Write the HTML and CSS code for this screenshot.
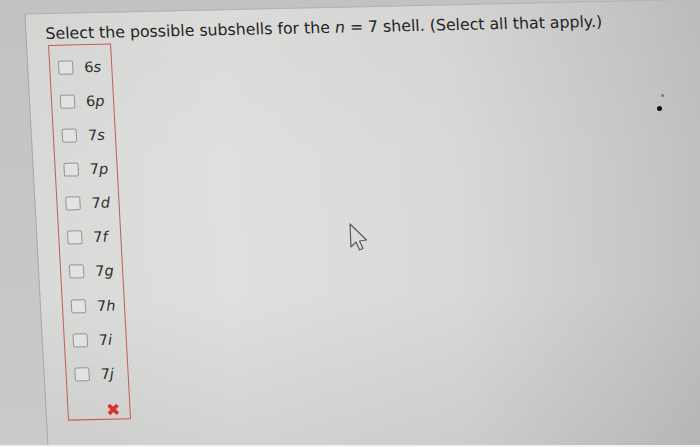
FILE: index.html
```html
<!DOCTYPE html>
<html>
<head>
<meta charset="utf-8">
<link rel="stylesheet" href="styles.css">
</head>
<body>
<div class="panel">
  <p class="question">Select the possible subshells for the <i>n</i> = 7 shell. (Select all that apply.)</p>
  <div class="answers">
    <label class="opt"><span class="check"></span><span class="lbl">6<i>s</i></span></label>
    <label class="opt"><span class="check"></span><span class="lbl">6<i>p</i></span></label>
    <label class="opt"><span class="check"></span><span class="lbl">7<i>s</i></span></label>
    <label class="opt"><span class="check"></span><span class="lbl">7<i>p</i></span></label>
    <label class="opt"><span class="check"></span><span class="lbl">7<i>d</i></span></label>
    <label class="opt"><span class="check"></span><span class="lbl">7<i>f</i></span></label>
    <label class="opt"><span class="check"></span><span class="lbl">7<i>g</i></span></label>
    <label class="opt"><span class="check"></span><span class="lbl">7<i>h</i></span></label>
    <label class="opt"><span class="check"></span><span class="lbl">7<i>i</i></span></label>
    <label class="opt"><span class="check"></span><span class="lbl">7<i>j</i></span></label>
    <div class="mark">&#10006;</div>
  </div>
</div>
<svg class="cursor" width="22" height="30" viewBox="0 0 22 30">
  <path d="M2 1 L3 24 L8 19 L11.5 27 L15 25.5 L11.5 18 L18.5 17 Z" fill="#dcdcdb" stroke="#5a5a5a" stroke-width="1.2" stroke-linejoin="round"/>
</svg>
<span class="dot dot-small"></span>
<span class="dot dot-big"></span>
</body>
</html>
```

FILE: styles.css
```css
html {
  background: #f2f2f2;
}
body {
  margin: 0;
  height: 445px;
  overflow: hidden;
  position: relative;
  background: linear-gradient(to bottom, #c2c2c0, #cacac8);
  font-family: "DejaVu Sans", Verdana, sans-serif;
  color: #242424;
}
.panel {
  margin: 13px 0 0 26px;
  width: 760px;
  height: 520px;
  box-sizing: border-box;
  padding: 10px 0 0 19px;
  border-left: 1px solid #a9a9a8;
  border-top: 1px solid #b2b2b1;
  background:
    linear-gradient(to bottom, rgba(0,0,0,0.02) 0%, rgba(0,0,0,0) 30%, rgba(0,0,0,0) 55%, rgba(0,0,0,0.07) 90%),
    linear-gradient(to right, #d9d9d7 0%, #dfdfdd 25%, #d9d9d7 55%, #c8c8c7 78%, #b9b9b9 95%);
  transform-origin: 21px 31px;
  transform: rotate(-1.25deg) skewX(1.8deg);
}
.question {
  margin: 0;
  font-size: 15.75px;
  line-height: 19px;
  white-space: nowrap;
}
.answers {
  margin: 2px 0 0 2px;
  width: 63px;
  height: 376px;
  box-sizing: border-box;
  border: 1.5px solid #c25c5c;
  padding: 12px 0 0 8px;
  display: flex;
  flex-direction: column;
  gap: 14.3px;
}
.opt {
  display: flex;
  align-items: center;
  height: 20px;
  gap: 11px;
}
.check {
  width: 15px;
  height: 14px;
  box-sizing: border-box;
  border: 1.5px solid #949494;
  border-radius: 2px;
  background: #e2e2e1;
  flex: none;
}
.lbl {
  font-size: 14.5px;
  color: #2e2e2e;
}
.mark {
  margin-top: 3px;
  align-self: flex-end;
  padding-right: 9px;
  color: #dc302c;
  font-size: 17px;
  line-height: 18px;
}
.cursor {
  position: absolute;
  left: 348px;
  top: 223px;
}
.dot {
  position: absolute;
  border-radius: 50%;
}
.dot-small {
  left: 661px;
  top: 94px;
  width: 3px;
  height: 3px;
  background: #777;
}
.dot-big {
  left: 657px;
  top: 106px;
  width: 5px;
  height: 5px;
  background: #111;
}
```
